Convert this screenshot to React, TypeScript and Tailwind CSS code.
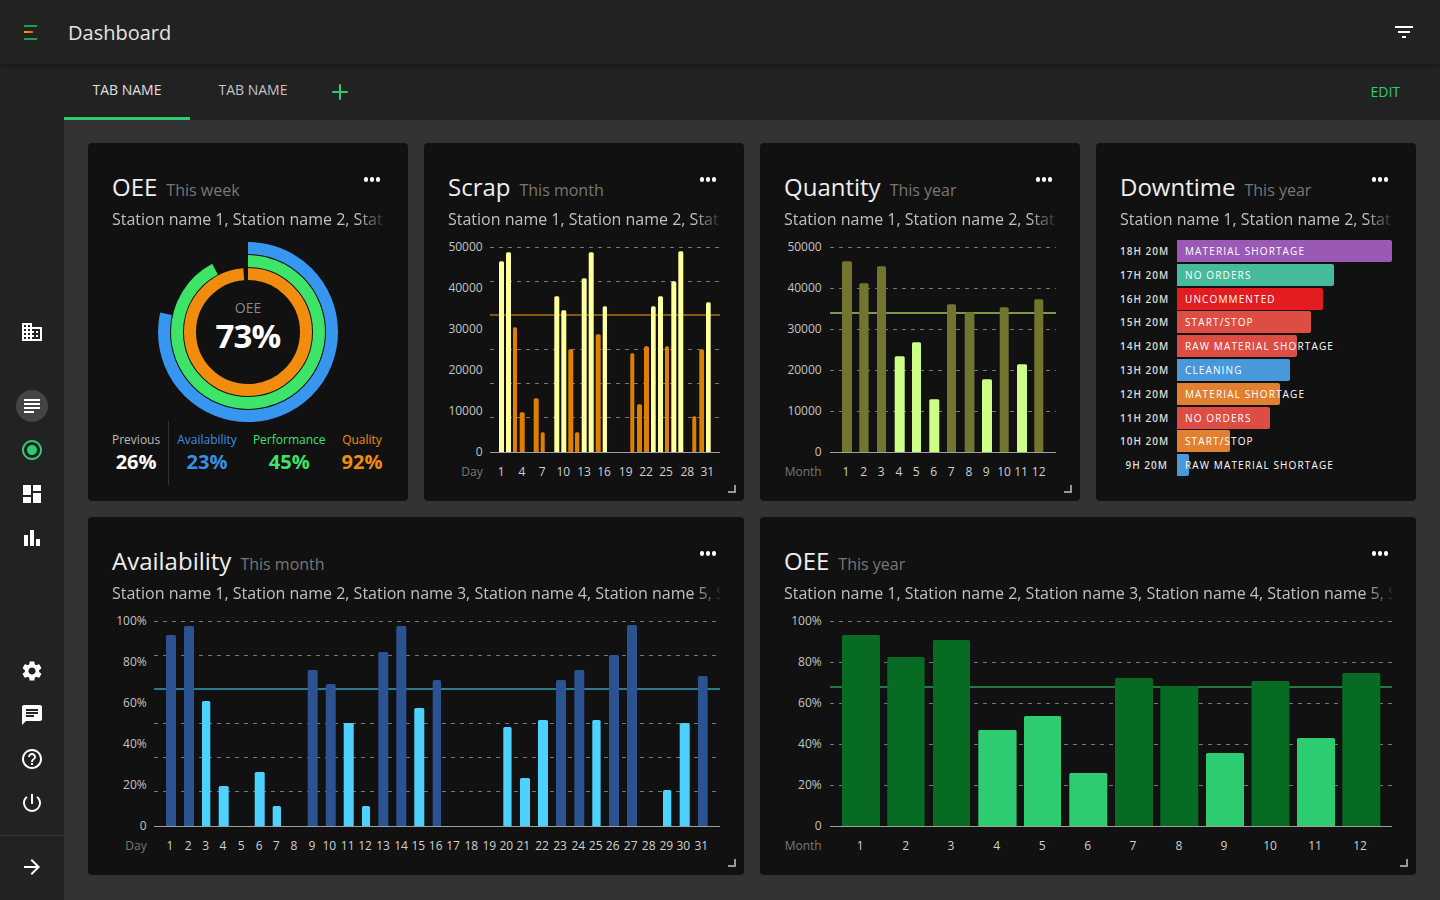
import type { ReactNode } from "react";
import { Plus } from "lucide-react";
import {
  MdArrowForward,
  MdBarChart,
  MdChat,
  MdDashboard,
  MdDomain,
  MdFilterList,
  MdHelpOutline,
  MdPowerSettingsNew,
  MdRadioButtonChecked,
  MdSettings,
  MdSubject,
} from "react-icons/md";

type Bar = [x: number, width: number, top: number, strong: boolean];
type Tick = [x: number, label: string];

type ChartProps = {
  ox: number;
  oy: number;
  width: number;
  left: number;
  right: number;
  labelRight: number;
  yLabels: string[];
  grid: number[];
  avg: number;
  avgColor: string;
  bars: Bar[];
  strongColor: string;
  softColor: string;
  unit: string;
  ticks: Tick[];
};

const scrapBars: Bar[] = [
  [499, 5, 261.3, true],
  [506, 5, 252.3, true],
  [513, 4, 327.3, false],
  [519.7, 5, 412.3, false],
  [533.7, 5, 398.3, false],
  [540.7, 4, 432.3, false],
  [554.3, 5, 296.3, true],
  [561.3, 5, 310.3, true],
  [568.3, 5, 349.3, false],
  [575, 4.3, 432.3, false],
  [581.7, 5, 278.3, true],
  [588.7, 5, 252.3, true],
  [595.7, 5, 334.3, false],
  [602.7, 4.3, 306.3, true],
  [630.3, 4, 353.3, false],
  [637, 5, 404.3, false],
  [644, 5, 346.3, false],
  [651, 4.7, 306.3, true],
  [658, 5, 296.3, true],
  [665, 4, 346.3, false],
  [671.3, 5, 281.3, true],
  [678.3, 5, 251.3, true],
  [692.3, 4, 416.3, false],
  [699.3, 4.7, 349.3, false],
  [706, 4.7, 302.3, true],
];

const quantityBars: Bar[] = [
  [842, 10, 261.3, true],
  [859.3, 9.3, 283.3, true],
  [877, 9, 266.3, true],
  [894.7, 10, 356.3, false],
  [912, 9, 342.3, false],
  [929.3, 10, 399.3, false],
  [947, 9, 304.3, true],
  [964.7, 9.7, 312.3, true],
  [982, 10, 379.3, false],
  [999.7, 9, 307.3, true],
  [1017, 10, 364.3, false],
  [1034.3, 9, 299.3, true],
];

const availabilityBars: Bar[] = [
  [166, 10, 635, true],
  [184, 10, 626, true],
  [202, 8.3, 701, false],
  [218.7, 10, 786, false],
  [254.7, 10, 772, false],
  [272.7, 8.3, 806, false],
  [307.7, 10, 670, true],
  [325.7, 10, 684, true],
  [343.7, 10, 723, false],
  [362, 8, 806, false],
  [378.3, 10, 652, true],
  [396.3, 10, 626, true],
  [414.3, 10, 708, false],
  [432.7, 8.3, 680, true],
  [503.3, 8.3, 727, false],
  [520, 10, 778, false],
  [538, 10, 720, false],
  [556, 10, 680, true],
  [574.3, 10, 670, true],
  [592.3, 8.3, 720, false],
  [609, 10, 655, true],
  [627, 10, 625, true],
  [663, 8.3, 790, false],
  [679.7, 10, 723, false],
  [698, 9.7, 676, true],
];

const oeeBars: Bar[] = [
  [842, 38, 635, true],
  [887.3, 37.3, 657, true],
  [933, 37, 640, true],
  [978.3, 38.3, 730, false],
  [1024, 37, 716, false],
  [1069.3, 38, 773, false],
  [1115, 38, 678, true],
  [1160.3, 38, 686, true],
  [1206, 38, 753, false],
  [1251.5, 38, 681, true],
  [1297, 38, 738, false],
  [1342.3, 38, 673, true],
];

const scrapTicks: Tick[] = [
  [501.3, "1"],
  [522, "4"],
  [542.3, "7"],
  [563.3, "10"],
  [584, "13"],
  [604, "16"],
  [625.7, "19"],
  [646, "22"],
  [666, "25"],
  [687.3, "28"],
  [707.3, "31"],
];

const availabilityX = [
  170, 188.3, 205.7, 223, 241.3, 259.3, 276.3, 294, 312, 329.3, 347.7, 365, 383, 401, 418.3, 435.7, 453, 471.3, 489.3,
  506.3, 523.3, 542, 560, 578.3, 595.7, 612.7, 630.7, 648.7, 666.3, 683.3, 701.3,
];

const quantityX = [846, 863.7, 881.3, 899, 916.3, 933.7, 951.3, 969, 986.3, 1004, 1021, 1038.7];
const oeeX = [860.3, 905.7, 951, 996.7, 1042.3, 1087.7, 1133, 1179, 1224, 1270, 1315, 1360];

const numberTicks = (xs: number[]): Tick[] => xs.map((x, i) => [x, String(i + 1)]);

const countLabels = ["50000", "40000", "30000", "20000", "10000", "0"];
const percentLabels = ["100%", "80%", "60%", "40%", "20%", "0"];

const shortStations = "Station name 1, Station name 2, Stat";
const longStations = "Station name 1, Station name 2, Station name 3, Station name 4, Station name 5, S";

const downtime = [
  { time: "18H 20M", label: "MATERIAL SHORTAGE", width: 215, color: "bg-[#9b59b6]" },
  { time: "17H 20M", label: "NO ORDERS", width: 157, color: "bg-[#45bb9c]" },
  { time: "16H 20M", label: "UNCOMMENTED", width: 146, color: "bg-[#e31c21]" },
  { time: "15H 20M", label: "START/STOP", width: 134, color: "bg-[#dd4d44]" },
  { time: "14H 20M", label: "RAW MATERIAL SHORTAGE", width: 120, color: "bg-[#dd4d44]" },
  { time: "13H 20M", label: "CLEANING", width: 113, color: "bg-[#4a98dc]" },
  { time: "12H 20M", label: "MATERIAL SHORTAGE", width: 103, color: "bg-[#e08030]" },
  { time: "11H 20M", label: "NO ORDERS", width: 93, color: "bg-[#dd4d44]" },
  { time: "10H 20M", label: "START/STOP", width: 53, color: "bg-[#e08030]" },
  { time: "9H 20M", label: "RAW MATERIAL SHORTAGE", width: 12, color: "bg-[#4a98dc]" },
];

function Chart(props: ChartProps) {
  const { ox, oy, width, left, right, labelRight, yLabels, grid, avg, avgColor, bars, strongColor, softColor } = props;
  const base = oy + 214;
  return (
    <svg className="block -mx-6 mt-2" width={width} height={252} viewBox={`${ox} ${oy} ${width} 252`}>
      {grid.map((y) => (
        <line key={y} x1={left} x2={right} y1={y} y2={y} stroke="#777" strokeWidth={1} strokeDasharray="4 5" />
      ))}
      <line x1={left} x2={right} y1={avg} y2={avg} stroke={avgColor} strokeWidth={2} />
      <line x1={left} x2={right} y1={base + 0.5} y2={base + 0.5} stroke="#a0a0a0" strokeWidth={1} />
      {bars.map(([x, w, top, strong]) => (
        <path
          key={x}
          d={`M${x} ${base}V${top + 1.5}Q${x} ${top} ${x + 1.5} ${top}H${x + w - 1.5}Q${x + w} ${top} ${x + w} ${top + 1.5}V${base}Z`}
          fill={strong ? strongColor : softColor}
        />
      ))}
      {yLabels.map((label, i) => (
        <text key={label} x={labelRight} y={oy + 8.5 + i * 41} textAnchor="end" dominantBaseline="central" fontSize={12} fill="#c4c4c4">
          {label}
        </text>
      ))}
      <text x={labelRight} y={oy + 233.8} textAnchor="end" dominantBaseline="central" fontSize={12} fill="#777">
        {props.unit}
      </text>
      {props.ticks.map(([x, label]) => (
        <text key={label} x={x} y={oy + 233.8} textAnchor="middle" dominantBaseline="central" fontSize={12} fill="#d0d0d0">
          {label}
        </text>
      ))}
    </svg>
  );
}

function Card({
  title,
  period,
  stations,
  resizable,
  className,
  children,
}: {
  title: string;
  period: string;
  stations: string;
  resizable?: boolean;
  className?: string;
  children: ReactNode;
}) {
  return (
    <div className={`relative h-[358px] rounded bg-[#111] px-6 pt-7 ${className ?? ""}`}>
      <div className="absolute right-7 top-[34px] flex gap-[1.5px]">
        <span className="size-[4.5px] rounded-full bg-white" />
        <span className="size-[4.5px] rounded-full bg-white" />
        <span className="size-[4.5px] rounded-full bg-white" />
      </div>
      <div className="flex items-baseline gap-[9px] leading-8">
        <span className="text-2xl text-[#eee]">{title}</span>
        <span className="text-base text-[#777]">{period}</span>
      </div>
      <div className="mt-[5px] overflow-hidden whitespace-nowrap text-base leading-[22px] text-[#c0c0c0] [mask-image:linear-gradient(to_right,black_calc(100%-26px),rgba(0,0,0,0.1))]">
        {stations}
      </div>
      {children}
      {resizable && <div className="absolute bottom-2 right-2 size-2 border-b-2 border-r-2 border-[#999]" />}
    </div>
  );
}

function Donut() {
  const rings = [
    { r: 84, pct: 78.5, color: "#3696f0" },
    { r: 71, pct: 92.3, color: "#3de468" },
    { r: 58, pct: 98.8, color: "#f28c0f" },
  ];
  return (
    <div className="relative mx-auto mt-3 size-[180px]">
      <svg width={180} height={180} viewBox="0 0 180 180" className="-rotate-90">
        {rings.map((ring) => (
          <circle
            key={ring.r}
            cx={90}
            cy={90}
            r={ring.r}
            fill="none"
            stroke={ring.color}
            strokeWidth={12}
            pathLength={100}
            strokeDasharray={`${ring.pct} 100`}
          />
        ))}
      </svg>
      <div className="absolute inset-0 flex flex-col items-center justify-center pb-[13px]">
        <span className="text-sm leading-5 text-[#888]">OEE</span>
        <span className="text-[33px] font-bold leading-9 tracking-tight text-white">73%</span>
      </div>
    </div>
  );
}

function Stat({ label, value, labelColor, valueColor }: { label: string; value: string; labelColor: string; valueColor: string }) {
  return (
    <div className="flex flex-col items-center">
      <span className={`text-xs leading-[18px] ${labelColor}`}>{label}</span>
      <span className={`text-xl font-bold leading-[26px] ${valueColor}`}>{value}</span>
    </div>
  );
}

function SideIcon({ children }: { children: ReactNode }) {
  return <div className="flex h-11 items-center justify-center text-white">{children}</div>;
}

export default function App() {
  return (
    <div className="flex h-screen w-full flex-col overflow-hidden bg-[#222] font-['Open_Sans',sans-serif]">
      <header className="relative z-10 flex h-16 shrink-0 items-center justify-between bg-[#222] px-6 shadow-[0_2px_4px_rgba(0,0,0,0.3)]">
        <div className="flex items-center">
          <div className="flex w-[13px] flex-col gap-[4.5px]">
            <span className="h-[2px] w-full bg-[#1e9e50]" />
            <span className="h-[2px] w-[9px] bg-gradient-to-r from-[#f0b000] to-[#e06010]" />
            <span className="h-[2px] w-full bg-[#1e9e50]" />
          </div>
          <h1 className="ml-[31px] pt-[2px] text-xl text-[#e4e4e4]">Dashboard</h1>
        </div>
        <MdFilterList size={24} className="text-white" />
      </header>

      <div className="flex min-h-0 flex-1">
        <aside className="flex w-16 shrink-0 flex-col bg-[#222] pt-[246px]">
          <SideIcon>
            <MdDomain size={24} />
          </SideIcon>
          <div className="mt-[30px]">
            <SideIcon>
              <span className="flex size-8 items-center justify-center rounded-full bg-[#444]">
                <MdSubject size={24} />
              </span>
            </SideIcon>
            <SideIcon>
              <MdRadioButtonChecked size={24} className="text-[#2ecc71]" />
            </SideIcon>
            <SideIcon>
              <MdDashboard size={24} />
            </SideIcon>
            <SideIcon>
              <MdBarChart size={24} />
            </SideIcon>
          </div>
          <div className="mb-[10px] mt-auto">
            <SideIcon>
              <MdSettings size={24} />
            </SideIcon>
            <SideIcon>
              <MdChat size={24} />
            </SideIcon>
            <SideIcon>
              <MdHelpOutline size={24} />
            </SideIcon>
            <SideIcon>
              <MdPowerSettingsNew size={24} />
            </SideIcon>
          </div>
          <div className="flex h-[65px] items-center justify-center border-t border-[#383838] pb-[2px] text-white">
            <MdArrowForward size={24} />
          </div>
        </aside>

        <main className="flex min-w-0 flex-1 flex-col">
          <nav className="flex h-14 shrink-0 items-stretch bg-[#222] pr-10">
            <div className="flex w-[126px] items-center justify-center border-b-[3px] border-[#2ecc71] pb-[1px] text-sm text-[#e0e0e0]">
              TAB NAME
            </div>
            <div className="flex w-[126px] items-center justify-center border-b-[3px] border-transparent pb-[1px] text-sm text-[#c4c4c4]">
              TAB NAME
            </div>
            <div className="ml-3 flex items-center">
              <Plus size={24} strokeWidth={2} className="text-[#2ecc71]" />
            </div>
            <div className="ml-auto flex items-center text-sm font-medium text-[#2ecc71]">EDIT</div>
          </nav>

          <div className="grid flex-1 grid-cols-4 content-start gap-4 bg-[#333] px-6 pt-[23px]">
            <Card title="OEE" period="This week" stations={shortStations}>
              <Donut />
              <div className="-mt-px flex h-16 items-start gap-4">
                <div className="flex h-16 border-r border-[#333] pr-2 pt-[10px]">
                  <Stat label="Previous" value="26%" labelColor="text-[#bbb]" valueColor="text-white" />
                </div>
                <div className="-ml-2 flex gap-4 pt-[10px]">
                  <Stat label="Availability" value="23%" labelColor="text-[#3b8fe0]" valueColor="text-[#3b8fe0]" />
                  <Stat label="Performance" value="45%" labelColor="text-[#3de468]" valueColor="text-[#3de468]" />
                  <Stat label="Quality" value="92%" labelColor="text-[#f28c0f]" valueColor="text-[#f28c0f]" />
                </div>
              </div>
            </Card>

            <Card title="Scrap" period="This month" stations={shortStations} resizable>
              <Chart
                ox={424}
                oy={238}
                width={320}
                left={490}
                right={720}
                labelRight={482.7}
                yLabels={countLabels}
                grid={[247.5, 281.5, 349.5, 383.5, 417.5]}
                avg={315}
                avgColor="#85560f"
                bars={scrapBars}
                strongColor="#ffff9d"
                softColor="#dd8000"
                unit="Day"
                ticks={scrapTicks}
              />
            </Card>

            <Card title="Quantity" period="This year" stations={shortStations} resizable>
              <Chart
                ox={760}
                oy={238}
                width={320}
                left={830}
                right={1056}
                labelRight={821.7}
                yLabels={countLabels}
                grid={[247.5, 288.5, 329.5, 370.5, 411.5]}
                avg={313}
                avgColor="#7a9a4a"
                bars={quantityBars}
                strongColor="#72752d"
                softColor="#cdff87"
                unit="Month"
                ticks={numberTicks(quantityX)}
              />
            </Card>

            <Card title="Downtime" period="This year" stations={shortStations}>
              <div className="mt-[10px] flex flex-col gap-[1.8px]">
                {downtime.map((row) => (
                  <div key={row.time} className="flex h-[22px] items-center">
                    <span className="w-12 whitespace-nowrap pt-[1px] text-right text-[10px] font-semibold tracking-[1px] text-[#ddd]">{row.time}</span>
                    <div className="relative ml-[9px] h-full">
                      <div className={`h-full rounded-r-[2px] ${row.color}`} style={{ width: row.width }} />
                      <span className="absolute left-2 top-0 whitespace-nowrap text-[10px] font-medium leading-[23px] tracking-[1.13px] text-white">
                        {row.label}
                      </span>
                    </div>
                  </div>
                ))}
              </div>
            </Card>

            <Card title="Availability" period="This month" stations={longStations} resizable className="col-span-2">
              <Chart
                ox={88}
                oy={612}
                width={656}
                left={154}
                right={720}
                labelRight={146.7}
                yLabels={percentLabels}
                grid={[621.5, 655.5, 723.5, 757.5, 791.5]}
                avg={689}
                avgColor="#2a7a8c"
                bars={availabilityBars}
                strongColor="#2b5291"
                softColor="#4dd2ff"
                unit="Day"
                ticks={numberTicks(availabilityX)}
              />
            </Card>

            <Card title="OEE" period="This year" stations={longStations} resizable className="col-span-2">
              <Chart
                ox={760}
                oy={612}
                width={656}
                left={830}
                right={1392}
                labelRight={821.7}
                yLabels={percentLabels}
                grid={[621.5, 662.5, 703.5, 744.5, 785.5]}
                avg={687}
                avgColor="#1f7a45"
                bars={oeeBars}
                strongColor="#086b23"
                softColor="#2ecc71"
                unit="Month"
                ticks={numberTicks(oeeX)}
              />
            </Card>
          </div>
        </main>
      </div>
    </div>
  );
}
